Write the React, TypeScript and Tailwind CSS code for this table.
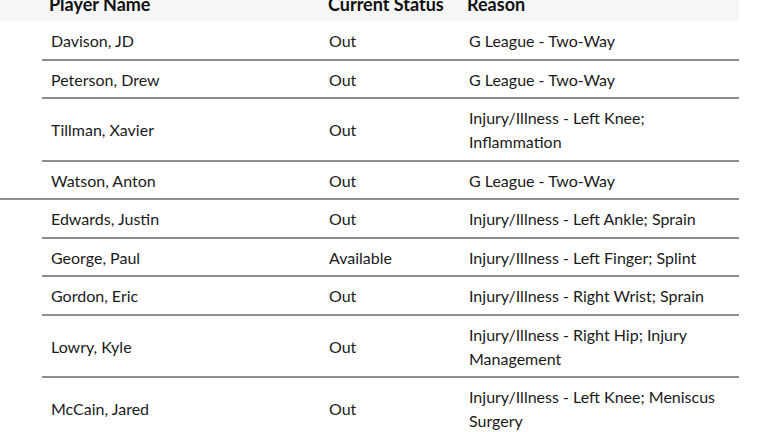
type Row = {
  name: string;
  status: string;
  reason: string[];
  groupEnd?: boolean;
  last?: boolean;
};

const rows: Row[] = [
  { name: "Davison, JD", status: "Out", reason: ["G League - Two-Way"] },
  { name: "Peterson, Drew", status: "Out", reason: ["G League - Two-Way"] },
  { name: "Tillman, Xavier", status: "Out", reason: ["Injury/Illness - Left Knee;", "Inflammation"] },
  { name: "Watson, Anton", status: "Out", reason: ["G League - Two-Way"], groupEnd: true },
  { name: "Edwards, Justin", status: "Out", reason: ["Injury/Illness - Left Ankle; Sprain"] },
  { name: "George, Paul", status: "Available", reason: ["Injury/Illness - Left Finger; Splint"] },
  { name: "Gordon, Eric", status: "Out", reason: ["Injury/Illness - Right Wrist; Sprain"] },
  { name: "Lowry, Kyle", status: "Out", reason: ["Injury/Illness - Right Hip; Injury", "Management"] },
  { name: "McCain, Jared", status: "Out", reason: ["Injury/Illness - Left Knee; Meniscus", "Surgery"], last: true },
];

const font = { fontFamily: "Lato, 'Open Sans', sans-serif" };

function BodyRow({ row, first }: { row: Row; first?: boolean }) {
  const line = row.last ? "" : "border-b-2 border-[#8d8d8d]";
  return (
    <div className={`flex ${row.groupEnd ? line : ""}`}>
      <div className="w-[42px] shrink-0" />
      <div
        className={`flex flex-1 items-center pb-[5.5px] ${first ? "pt-[8px]" : "pt-[7px]"} ${row.groupEnd ? "" : line}`}
      >
        <div className="w-[278px] shrink-0 pl-[9px]">{row.name}</div>
        <div className="w-[140px] shrink-0 pl-[9px]">{row.status}</div>
        <div className="flex-1 pl-[9px]">
          {row.reason.map((r) => (
            <div key={r}>{r}</div>
          ))}
        </div>
      </div>
    </div>
  );
}

export default function App() {
  return (
    <div className="w-[768px] h-[432px] overflow-hidden bg-white text-[#1a1a1a]" style={font}>
      <div className="w-[739px] text-[16px] leading-[24px]">
        <div className="-mt-[8px] flex bg-[#f5f6f6] pb-[5px] text-[18px] font-bold text-[#111]">
          <div className="w-[42px] shrink-0" />
          <div className="w-[278px] shrink-0 pl-[7px]">Player Name</div>
          <div className="w-[140px] shrink-0 pl-[8px]">Current Status</div>
          <div className="flex-1 pl-[7px]">Reason</div>
        </div>
        {rows.map((row, i) => (
          <BodyRow key={row.name} row={row} first={i === 0} />
        ))}
      </div>
    </div>
  );
}
